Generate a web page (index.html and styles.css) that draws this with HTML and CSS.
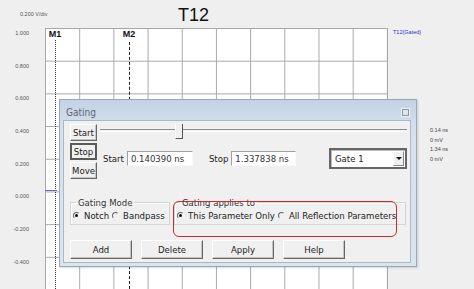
FILE: index.html
```html
<!DOCTYPE html>
<html lang="en">
<head>
    <meta charset="UTF-8">
    <title>T12 Gating</title>
    <link rel="stylesheet" href="styles.css">
</head>
<body>

<div class="scope">
    <div class="scope-head">
        <span class="vdiv">0.200 V/div</span>
        <span class="title">T12</span>
    </div>
    <div class="scope-body">
        <div class="yaxis">
            <div class="tick">1.000</div>
            <div class="tick">0.800</div>
            <div class="tick">0.600</div>
            <div class="tick">0.400</div>
            <div class="tick">0.200</div>
            <div class="tick">0.000</div>
            <div class="tick">-0.200</div>
            <div class="tick">-0.400</div>
        </div>
        <div class="plot">
            <div class="marker m1"><span>M1</span></div>
            <div class="marker m2"><span>M2</span></div>
            <div class="trace"></div>
        </div>
        <div class="legend">
            <div class="trace-name">T12(Gated)</div>
            <div class="readout">
                <div>0.14 ns</div>
                <div>0 mV</div>
                <div>1.34 ns</div>
                <div>0 mV</div>
            </div>
        </div>
    </div>
</div>

<div class="dialog">
    <div class="dialog-title">
        <span>Gating</span>
        <span class="close-box"></span>
    </div>
    <div class="dialog-body">
        <div class="gate-top">
            <div class="mode-buttons">
                <button class="btn small">Start</button>
                <button class="btn small active">Stop</button>
                <button class="btn small">Move</button>
            </div>
            <div class="gate-controls">
                <div class="slider">
                    <div class="track"></div>
                    <div class="thumb"></div>
                </div>
                <div class="fields">
                    <label class="field-label">Start</label>
                    <div class="textbox start-box">0.140390 ns</div>
                    <label class="field-label stop-label">Stop</label>
                    <div class="textbox stop-box">1.337838 ns</div>
                    <div class="combo">
                        <span class="combo-text">Gate 1</span>
                        <span class="combo-arrow"></span>
                    </div>
                </div>
            </div>
        </div>

        <div class="groups">
            <fieldset class="group mode-group">
                <legend>Gating Mode</legend>
                <span class="radio checked"></span><span class="radio-text">Notch</span>
                <span class="radio"></span><span class="radio-text">Bandpass</span>
            </fieldset>
            <fieldset class="group applies-group">
                <legend>Gating applies to</legend>
                <span class="radio checked"></span><span class="radio-text">This Parameter Only</span>
                <span class="radio"></span><span class="radio-text">All Reflection Parameters</span>
                <div class="highlight"></div>
            </fieldset>
        </div>

        <div class="actions">
            <button class="btn wide">Add</button>
            <button class="btn wide">Delete</button>
            <button class="btn wide">Apply</button>
            <button class="btn wide">Help</button>
        </div>
    </div>
</div>

</body>
</html>
```

FILE: styles.css
```css
html, body {
    margin: 0;
    padding: 0;
}
body {
    width: 474px;
    height: 289px;
    overflow: hidden;
    background-color: #efefef;
    font-family: "Liberation Sans", Arial, sans-serif;
    position: relative;
}

/* scope plot */
.scope-head {
    height: 28px;
    display: flex;
    align-items: center;
}
.vdiv {
    width: 158px;
    padding-left: 20px;
    font-size: 5.5px;
    color: #555;
}
.title {
    font-size: 18px;
    color: #111;
    margin-top: 2px;
}
.scope-body {
    display: flex;
    height: 261px;
}
.yaxis {
    width: 45px;
}
.tick {
    height: 32.7px;
    width: 29px;
    line-height: 10px;
    text-align: right;
    font-size: 5.5px;
    color: #555;
}
.plot {
    position: relative;
    width: 343px;
    box-sizing: border-box;
    background-color: #fff;
    border-right: 1px solid #a8a8a8;
    background-image:
        linear-gradient(to right, #a8a8a8 1px, transparent 1px),
        linear-gradient(to bottom, #a8a8a8 1px, transparent 1px);
    background-size: 34.2px 100%, 100% 32.7px;
}
.marker {
    position: absolute;
    top: 2px;
    bottom: 0;
    width: 14px;
}
.marker span {
    display: block;
    font-size: 9px;
    font-weight: bold;
    line-height: 9px;
    color: #111;
    text-align: center;
    background-color: #fff;
}
.marker::after {
    content: "";
    position: absolute;
    top: 10px;
    bottom: 0;
    left: 7px;
}
.m1 {
    left: 3px;
}
.m1::after {
    border-left: 1px dotted #333;
}
.m2 {
    left: 77px;
}
.m2::after {
    border-left: 1px dashed #222;
    top: 12px;
}
.trace {
    position: absolute;
    left: 0;
    top: 162px;
    width: 12px;
    height: 1px;
    background-color: #6a6acc;
}
.legend {
    padding-left: 5px;
    font-size: 5.5px;
}
.trace-name {
    color: #2d2dc8;
    margin-top: 1px;
}
.readout {
    margin-top: 91px;
    margin-left: 37px;
    color: #444;
    line-height: 9.7px;
}

/* gating dialog */
.dialog {
    position: absolute;
    left: 59px;
    top: 99px;
    width: 358px;
    height: 168px;
    box-sizing: border-box;
    border: 1px solid #97a8ba;
    background: linear-gradient(#c3d3e4, #d5e1ed 30px, #d9e4ef);
    box-shadow: 1px 1px 2px rgba(0, 0, 0, 0.15);
    display: flex;
    flex-direction: column;
    font-family: "Liberation Sans Narrow", "DejaVu Sans Condensed", "Liberation Sans", sans-serif;
    font-size: 9.5px;
    color: #222;
    white-space: nowrap;
}
.dialog-title {
    height: 20px;
    box-sizing: border-box;
    padding: 4px 6px 0 6px;
    display: flex;
    align-items: center;
    justify-content: space-between;
    color: #5b6672;
    font-size: 10px;
}
.close-box {
    width: 5px;
    height: 5px;
    border: 1px solid #8b97a3;
    background-color: #dfe6ee;
    box-shadow: 0 0 0 1px #eef2f6;
    margin-right: 1px;
}
.dialog-body {
    flex: 1;
    margin: 0 5px 3px 3px;
    border: 1px solid #a9b7c6;
    background-color: #f0f0f0;
    padding: 3px 0 0 6px;
}
.gate-top {
    display: flex;
}
.mode-buttons {
    display: flex;
    flex-direction: column;
    gap: 2px;
}
.btn {
    font: inherit;
    color: #222;
    padding: 0;
    box-sizing: border-box;
    background-color: #f0f0f0;
    border: 1px solid;
    border-color: #fff #666 #666 #fff;
    box-shadow: inset -1px -1px 0 #c4c4c4;
}
.btn.small {
    width: 27px;
    height: 17px;
    line-height: 13px;
}
.btn.active {
    border: 2px solid #5a5a5a;
    box-shadow: none;
}
.gate-controls {
    flex: 1;
    margin-left: 3px;
    margin-right: 3px;
}
.slider {
    position: relative;
    height: 20px;
}
.track {
    position: absolute;
    left: 0;
    right: 0;
    top: 5px;
    height: 1px;
    border-top: 1px solid #8f8f8f;
    border-bottom: 1px solid #fff;
}
.thumb {
    position: absolute;
    left: 75px;
    top: 0;
    width: 6px;
    height: 14px;
    background-color: #f0f0f0;
    border-left: 1px solid #fff;
    border-right: 1px solid #555;
    border-bottom: 1px solid #555;
}
.fields {
    display: flex;
    align-items: center;
    margin-top: 4px;
}
.field-label {
    margin-left: 3px;
}
.stop-label {
    margin-left: 16px;
}
.textbox {
    height: 15px;
    box-sizing: border-box;
    background-color: #fff;
    border: 1px solid;
    border-color: #a0a0a0 #fafafa #fafafa #a0a0a0;
    line-height: 13px;
    padding-left: 3px;
    margin-left: 3px;
    color: #333;
}
.start-box {
    width: 66px;
}
.stop-box {
    width: 65px;
}
.combo {
    margin-left: auto;
    width: 78px;
    height: 21px;
    box-sizing: border-box;
    border: 2px solid #666;
    box-shadow: inset 1px 1px 0 #bbb;
    background-color: #fff;
    display: flex;
    align-items: center;
}
.combo-text {
    flex: 1;
    padding-left: 4px;
}
.combo-arrow {
    width: 11px;
    height: 15px;
    margin-right: 1px;
    box-sizing: border-box;
    border: 1px solid;
    border-color: #fff #888 #888 #fff;
    background-color: #f0f0f0;
    position: relative;
}
.combo-arrow::after {
    content: "";
    position: absolute;
    left: 2px;
    top: 5px;
    border-left: 3px solid transparent;
    border-right: 3px solid transparent;
    border-top: 3px solid #111;
}
.groups {
    display: flex;
    margin-top: 18px;
}
.group {
    margin: 0;
    padding: 0 0 1px 2px;
    height: 28px;
    box-sizing: border-box;
    border: 1px solid #d4d4d4;
    box-shadow: inset 1px 1px 0 #fff;
    display: flex;
    align-items: center;
    position: relative;
}
.group legend {
    padding: 0 2px;
    margin-left: 3px;
    line-height: 11px;
    color: #333;
}
.mode-group {
    width: 100px;
}
.applies-group {
    width: 232px;
    margin-left: 4px;
}
.radio {
    flex: none;
    width: 7px;
    height: 7px;
    box-sizing: border-box;
    border-radius: 50%;
    border: 1px solid;
    border-color: #666 #f4f4f4 #f4f4f4 #666;
    margin-right: 4px;
    position: relative;
}
.radio.checked::after {
    content: "";
    position: absolute;
    left: 1px;
    top: 1px;
    width: 3px;
    height: 3px;
    border-radius: 50%;
    background-color: #111;
}
.radio-text {
    margin-right: 3px;
}
.highlight {
    position: absolute;
    left: -2px;
    top: -7px;
    width: 224px;
    height: 36px;
    box-sizing: border-box;
    border: 1.5px solid #d4262c;
    border-radius: 6px;
}
.actions {
    display: flex;
    gap: 9px;
    margin-top: 15px;
}
.btn.wide {
    width: 62px;
    height: 19px;
}
```
